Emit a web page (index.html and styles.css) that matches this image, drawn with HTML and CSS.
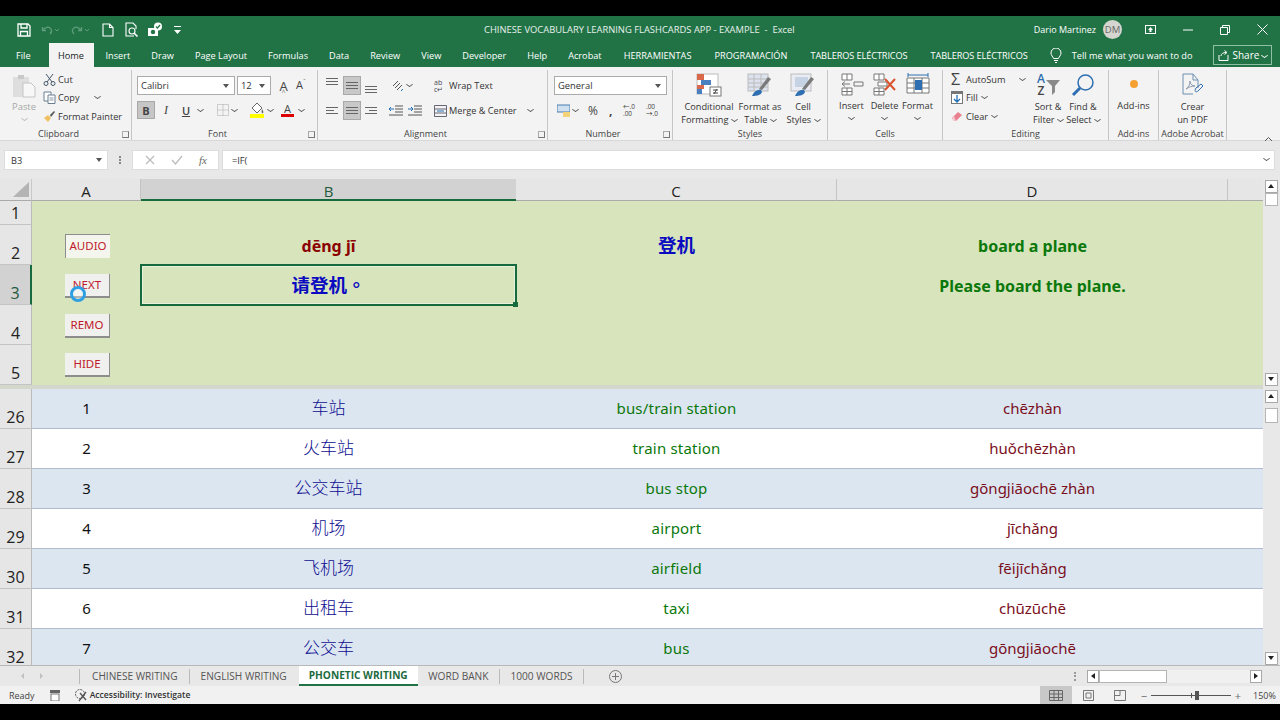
FILE: index.html
```html
<!DOCTYPE html>
<html lang="en">
<head>
    <meta charset="UTF-8">
    <title>CHINESE VOCABULARY LEARNING FLASHCARDS APP - EXAMPLE - Excel</title>
    <link rel="stylesheet" href="styles.css">
</head>
<body>
    <div class="window">
        <!-- title bar -->
        <div class="titlebar">
            <div class="qat">
                <svg class="q-save" width="14" height="14" viewBox="0 0 14 14" fill="none" stroke="#fff" stroke-width="1.3"><path d="M1 1h10l2 2v10H1z"/><path d="M4 1v4h6V1M3.500 13V8.500h7V13"/></svg>
                <svg class="q-undo" width="18" height="12" viewBox="0 0 18 12" fill="none" stroke="#5f9c7b" stroke-width="1.3"><path d="M1.500 3v3.500H5M2 6.500C3.500 3 8 2 10 5c1 1.500.5 3.500-1 5"/><path d="M14 5l2 2 2-2" stroke-width="1"/></svg>
                <svg class="q-redo" width="18" height="12" viewBox="0 0 18 12" fill="none" stroke="#5f9c7b" stroke-width="1.3"><path d="M10.500 3v3.500H7M10 6.500C8.500 3 4 2 2 5c-1 1.500-.5 3.500 1 5"/><path d="M14 5l2 2 2-2" stroke-width="1"/></svg>
                <svg class="q-new" width="12" height="14" viewBox="0 0 12 14" fill="none" stroke="#fff" stroke-width="1.1"><path d="M1 1h6.500L11 4.500V13H1zM7.500 1v3.500H11"/></svg>
                <svg class="q-prev" width="14" height="15" viewBox="0 0 14 15" fill="none" stroke="#fff" stroke-width="1.1"><path d="M9 14H1V1h7l3 3v3"/><circle cx="7" cy="9" r="3"/><path d="M9 11l3.500 3.500" stroke-width="1.600"/></svg>
                <svg class="q-cam" width="16" height="15" viewBox="0 0 16 15"><path d="M1 6h10v8H1z" fill="#fff"/><circle cx="6" cy="10" r="2.200" fill="#217346"/><circle cx="11" cy="4.500" r="4" fill="#fff"/><path d="M9 4.500l1.500 1.500 2.500-3" fill="none" stroke="#217346" stroke-width="1.200"/></svg>
                <svg class="q-more" width="7" height="8" viewBox="0 0 7 8" fill="#fff"><rect y="0" width="7" height="1"/><path d="M0 4h7L3.500 8z"/></svg>
            </div>
            <div class="doc-title">CHINESE VOCABULARY LEARNING FLASHCARDS APP - EXAMPLE &nbsp;- &nbsp;Excel</div>
            <div class="win-right">
                <span class="user">Dario Martinez</span>
                <span class="avatar">DM</span>
                <svg class="w-display" width="11" height="9" viewBox="0 0 11 9"><rect x=".5" y=".5" width="10" height="8" fill="none" stroke="#fff"/><path d="M5.500 2L8 5H3z M4.500 5h2v2h-2z" fill="#fff"/></svg>
                <svg class="w-min" width="10" height="2" viewBox="0 0 10 2"><path d="M0 1h10" stroke="#fff"/></svg>
                <svg class="w-max" width="10" height="10" viewBox="0 0 10 10" fill="none" stroke="#fff"><path d="M.5 2.500h7v7h-7zM2.500 2.500v-2h7v7h-2"/></svg>
                <svg class="w-close" width="11" height="11" viewBox="0 0 11 11"><path d="M.5.500l10 10M10.500.500l-10 10" stroke="#fff"/></svg>
            </div>
        </div>

        <!-- ribbon tabs -->
        <div class="tabbar">
            <span class="tab file-tab">File</span>
            <span class="tab active">Home</span>
            <span class="tab">Insert</span>
            <span class="tab">Draw</span>
            <span class="tab">Page Layout</span>
            <span class="tab">Formulas</span>
            <span class="tab">Data</span>
            <span class="tab">Review</span>
            <span class="tab">View</span>
            <span class="tab">Developer</span>
            <span class="tab">Help</span>
            <span class="tab">Acrobat</span>
            <span class="tab caps">HERRAMIENTAS</span>
            <span class="tab caps">PROGRAMACIÓN</span>
            <span class="tab caps tight-caps">TABLEROS ELÉCTRICOS</span>
            <span class="tab caps tight-caps">TABLEROS ELÉCTRICOS</span>
            <svg class="bulb" width="12" height="15" viewBox="0 0 12 15" fill="none" stroke="#fff"><path d="M3.500 10.500C3 8.500 1 7.500 1 5a5 5 0 0 1 10 0c0 2.500-2 3.500-2.500 5.500zM4 12.500h4M5 14.500h2"/></svg>
            <span class="tell">Tell me what you want to do</span>
            <span class="share">
                <svg width="11" height="11" viewBox="0 0 11 11" fill="none" stroke="#fff"><path d="M1 5v5.500h9V5M3 6c0-2 2-3.500 5-3.500M6.500.5L9 2.500 6.500 4.500"/></svg>
                Share <i class="chev white"></i>
            </span>
        </div>

        <!-- ribbon -->
        <div class="ribbon">
            <div class="group g-clipboard">
                <div class="group-body">
                    <div class="paste">
                        <svg width="24" height="24" viewBox="0 0 24 24"><path d="M1 3h16v20H1z" fill="#dedede"/><path d="M6 1h6v4H6z" fill="#c8c8c8"/><path d="M11 9h8l4 4v10H11z" fill="#f7f7f7" stroke="#c4c4c4"/></svg>
                        <span>Paste</span>
                        <i class="chev light"></i>
                    </div>
                    <div class="clip-list">
                        <div class="clip-row">
                            <svg width="13" height="13" viewBox="0 0 13 13" fill="none" stroke="#44586a"><circle cx="3" cy="10.500" r="2"/><circle cx="10" cy="10.500" r="2"/><path d="M4 9L10 1M9 9L3 1"/></svg>
                            Cut
                        </div>
                        <div class="clip-row">
                            <svg width="13" height="13" viewBox="0 0 13 13" fill="#fff" stroke="#6a7f92"><path d="M1 1h7v9H1z"/><path d="M5 4h7v8.500H5z"/><path d="M6.500 7h4M6.500 9h4" stroke-width=".8"/></svg>
                            Copy <i class="chev copy-chev"></i>
                        </div>
                        <div class="clip-row">
                            <svg width="13" height="13" viewBox="0 0 13 13"><path d="M1 8l4-3 3 3-3 4z" fill="#f0c060"/><path d="M7 5l4-4 1 1-4 5z" fill="#555"/></svg>
                            Format Painter
                        </div>
                    </div>
                </div>
                <div class="group-label has-launcher">Clipboard<i class="launcher"></i></div>
            </div>

            <div class="group g-font">
                <div class="group-body col">
                    <div class="tool-row">
                        <div class="combo font-name">Calibri<i class="caret"></i></div>
                        <div class="combo font-size">12<i class="caret"></i></div>
                        <span class="grow-a big">A<sup>^</sup></span>
                        <span class="grow-a">A<sup>ˇ</sup></span>
                    </div>
                    <div class="tool-row second">
                        <span class="fbtn pressed"><b>B</b></span>
                        <span class="fbtn italic"><em>I</em></span>
                        <span class="fbtn under">U</span><i class="chev tight"></i>
                        <svg class="bord" width="12" height="12" viewBox="0 0 12 12" fill="none" stroke="#a8a8a8" stroke-dasharray="1 1"><path d="M.5.5h11v11H.5zM6 .5v11M.5 6h11"/></svg><i class="chev tight"></i>
                        <svg class="fill-ic" width="15" height="16" viewBox="0 0 15 16"><path d="M2 6l5-5 5 5-5 5z" fill="#fff" stroke="#666"/><path d="M12 7c1 2 2 3 1 4s-2-1-1-4z" fill="#666"/><rect y="12" width="14" height="4" fill="#ffff00"/></svg><i class="chev tight"></i>
                        <span class="color-a">A</span><i class="chev color-chev"></i>
                    </div>
                </div>
                <div class="group-label has-launcher">Font<i class="launcher"></i></div>
            </div>

            <div class="group g-align">
                <div class="group-body">
                    <div class="align-grid">
                        <span class="abtn"><i class="lines top"></i></span>
                        <span class="abtn pressed"><i class="lines"></i></span>
                        <span class="abtn"><i class="lines bottom"></i></span>
                        <span class="abtn"><i class="lines left"></i></span>
                        <span class="abtn pressed"><i class="lines"></i></span>
                        <span class="abtn"><i class="lines right"></i></span>
                    </div>
                    <div class="align-extra">
                        <div class="orient">
                            <svg width="13" height="13" viewBox="0 0 13 13" fill="none" stroke="#555"><path d="M2 7l5-5M4 9l5-5M6 11l5-5"/><path d="M10 12l2-2" stroke="#1f6fb5"/></svg>
                            <i class="chev tight"></i>
                        </div>
                        <div class="indent">
                            <svg width="14" height="11" viewBox="0 0 14 11" stroke="#555" fill="none"><path d="M6 1h8M6 4h8M6 7h8M0 10h14"/><path d="M5 4H0M2 2L0 4l2 2" stroke="#1f6fb5"/></svg>
                            <svg width="14" height="11" viewBox="0 0 14 11" stroke="#555" fill="none"><path d="M6 1h8M6 4h8M6 7h8M0 10h14"/><path d="M0 4h5M3 2l2 2-2 2" stroke="#1f6fb5"/></svg>
                        </div>
                    </div>
                    <div class="align-wrap">
                        <div class="wrap-row"><span class="ab">ab<br>c↵</span>Wrap Text</div>
                        <div class="wrap-row">
                            <svg width="13" height="12" viewBox="0 0 13 12" fill="none" stroke="#667"><path d="M.5.500h12v11H.5zM.5 4h12M.5 8h12"/><path d="M3 6h7" stroke="#1f6fb5"/></svg>
                            Merge &amp; Center <i class="chev merge-chev"></i>
                        </div>
                    </div>
                </div>
                <div class="group-label has-launcher">Alignment<i class="launcher"></i></div>
            </div>

            <div class="group g-number">
                <div class="group-body col">
                    <div class="combo general">General<i class="caret"></i></div>
                    <div class="num-row">
                        <svg width="13" height="13" viewBox="0 0 13 13"><rect y="1" width="13" height="7" fill="#cfe0f0" stroke="#4a7fb0"/><rect x="6" y="8" width="7" height="5" fill="#f3d27a"/></svg>
                        <i class="chev tight"></i>
                        <span class="pct">%</span>
                        <span class="comma">,</span>
                        <span class="dec">←.0<br>.00</span>
                        <span class="dec">.00<br>→.0</span>
                    </div>
                </div>
                <div class="group-label has-launcher">Number<i class="launcher"></i></div>
            </div>

            <div class="group g-styles">
                <div class="group-body big-row">
                    <div class="big cf-big">
                        <svg width="26" height="24" viewBox="0 0 26 24"><rect x="1" y="1" width="21" height="20" fill="#fff" stroke="#bbb"/><rect x="1" y="1" width="7" height="6" fill="#d9694a"/><rect x="5" y="7" width="10" height="5" fill="#4a7fc0"/><rect x="1" y="12" width="7" height="4" fill="#d9694a"/><rect x="1" y="16" width="5" height="5" fill="#4a7fc0"/><rect x="14" y="14" width="11" height="9" fill="#fff" stroke="#777"/><path d="M17 17h5M17 20h5M21 16l-3 5" stroke="#444" fill="none"/></svg>
                        <span>Conditional<br>Formatting <i class="chev inl"></i></span>
                    </div>
                    <div class="big fat-big">
                        <svg width="26" height="24" viewBox="0 0 26 24"><rect x="1" y="1" width="20" height="17" fill="#dce3ee" stroke="#bbb"/><path d="M1 6h20M1 10h20M1 14h20M7 1v17M14 1v17" stroke="#bbb"/><path d="M24 6l-9 11-3-1 9-12z" fill="#7a7a7a"/><path d="M5 23c2-5 6-7 9-6l1 2c-1 3-5 4-10 4z" fill="#2d6fb0"/></svg>
                        <span>Format as<br>Table <i class="chev inl"></i></span>
                    </div>
                    <div class="big cell-big">
                        <svg width="26" height="24" viewBox="0 0 26 24"><rect x="1" y="1" width="20" height="17" fill="#e9edf3" stroke="#bbb"/><rect x="5" y="4" width="13" height="10" fill="#c5d3e5"/><path d="M24 6l-9 11-3-1 9-12z" fill="#7a7a7a"/><path d="M5 23c2-5 6-7 9-6l1 2c-1 3-5 4-10 4z" fill="#2d6fb0"/></svg>
                        <span>Cell<br>Styles <i class="chev inl"></i></span>
                    </div>
                </div>
                <div class="group-label">Styles</div>
            </div>

            <div class="group g-cells">
                <div class="group-body big-row">
                    <div class="big">
                        <svg width="24" height="23" viewBox="0 0 24 23" fill="#fff" stroke="#777"><path d="M2 1h10v6H2zM7 1v6M2 15h10v7H2zM7 15v7M2 18.500h10"/><path d="M14 9h9v4h-9zM10 11H2M5 8.500L2 11l3 2.500" fill="none"/></svg>
                        <span>Insert</span><i class="chev"></i>
                    </div>
                    <div class="big">
                        <svg width="24" height="23" viewBox="0 0 24 23" fill="#fff" stroke="#777"><path d="M1 1h10v6H1zM6 1v6M1 15h10v7H1zM6 15v7M1 18.500h10M5 9h9v4H5z"/><path d="M12 6l10 11M22 6L12 17" stroke="#d9532c" stroke-width="2"/></svg>
                        <span>Delete</span><i class="chev"></i>
                    </div>
                    <div class="big">
                        <svg width="24" height="23" viewBox="0 0 24 23" fill="#fff" stroke="#777"><path d="M1 5h22v15H1zM8 5v15M16 5v15M1 10h22M1 15h22"/><rect x="9" y="7" width="7" height="10" fill="#2d6fb0" stroke="none"/><path d="M2 2h20M2 0v4M22 0v4" stroke="#2d6fb0"/></svg>
                        <span>Format</span><i class="chev"></i>
                    </div>
                </div>
                <div class="group-label">Cells</div>
            </div>

            <div class="group g-editing">
                <div class="group-body">
                    <div class="edit-list">
                        <div class="edit-row"><span class="sigma">Σ</span>AutoSum <i class="chev auto-chev"></i></div>
                        <div class="edit-row">
                            <svg width="12" height="13" viewBox="0 0 12 13"><rect x=".5" y=".5" width="11" height="12" fill="#fff" stroke="#777"/><rect x=".5" y=".5" width="11" height="2.500" fill="#777"/><path d="M6 4v7M3 8l3 3 3-3" fill="none" stroke="#1f6fb5" stroke-width="1.300"/></svg>
                            Fill <i class="chev inl"></i>
                        </div>
                        <div class="edit-row">
                            <svg width="12" height="11" viewBox="0 0 12 11"><path d="M1 7l6-6 4 3-6 6H3z" fill="#e8808f"/><path d="M1 7l2 3h2L3 5z" fill="#f6c6cc"/></svg>
                            Clear <i class="chev inl"></i>
                        </div>
                    </div>
                    <div class="big sort">
                        <div class="sort-icon">
                            <span class="az az-a">A</span>
                            <span class="az az-z">Z</span>
                            <svg width="14" height="15" viewBox="0 0 14 15"><path d="M0 0h14L9 6v6l-3 3V6z" fill="#8a8a8a"/></svg>
                        </div>
                        <span>Sort &amp;<br>Filter <i class="chev inl"></i></span>
                    </div>
                    <div class="big find">
                        <svg width="24" height="24" viewBox="0 0 24 24" fill="none"><circle cx="14.500" cy="9.500" r="7.500" stroke="#2d6fb0" stroke-width="1.500"/><path d="M9 15l-7 7" stroke="#2d6fb0" stroke-width="3"/></svg>
                        <span>Find &amp;<br>Select <i class="chev inl"></i></span>
                    </div>
                </div>
                <div class="group-label">Editing</div>
            </div>

            <div class="group g-addins">
                <div class="group-body big-row">
                    <div class="big addin">
                        <svg width="24" height="22" viewBox="0 0 24 22"><circle cx="12" cy="11" r="4" fill="#f5a033"/></svg>
                        <span>Add-ins</span>
                    </div>
                </div>
                <div class="group-label">Add-ins</div>
            </div>

            <div class="group g-acrobat">
                <div class="group-body big-row">
                    <div class="big">
                        <svg width="24" height="24" viewBox="0 0 24 24" fill="none" stroke="#6f8fb0"><path d="M17 15V7l-5-6H2v20h10"/><path d="M12 1v6h5"/><path d="M5 16c3-2 4-5 4-8 0 3 2 5 5 5-3 0-6 1-9 3z" stroke="#8a9ab0"/><path d="M15 15l5-4 2 2-5 5c-2 2-4 0-2-3z" stroke="#2d6fb0"/></svg>
                        <span>Crear<br>un PDF</span>
                    </div>
                </div>
                <div class="group-label">Adobe Acrobat</div>
            </div>
            <div class="collapse-ribbon">
                <svg width="9" height="5" viewBox="0 0 9 5" fill="none" stroke="#555"><path d="M.5 4.500l4-4 4 4"/></svg>
            </div>
        </div>

        <!-- formula bar -->
        <div class="formula-bar">
            <div class="name-box">B3<i class="caret"></i></div>
            <span class="fb-dots"></span>
            <div class="fb-buttons">
                <svg width="10" height="10" viewBox="0 0 10 10" stroke="#bbb" fill="none" stroke-width="1.200"><path d="M1 1l8 8M9 1L1 9"/></svg>
                <svg width="12" height="10" viewBox="0 0 12 10" stroke="#bbb" fill="none" stroke-width="1.200"><path d="M1 5l3.500 4L11 1"/></svg>
                <em>fx</em>
            </div>
            <div class="formula-input">=IF(<i class="chev fb-chev"></i></div>
        </div>

        <!-- sheet -->
        <div class="pane top-pane">
            <div class="pane-cells">
                <div class="sheet-row col-heads">
                    <div class="corner"><i></i></div>
                    <div class="col-head">A</div>
                    <div class="col-head selected">B</div>
                    <div class="col-head">C</div>
                    <div class="col-head">D</div>
                    <div class="col-head no-text"></div>
                </div>
                <div class="sheet-row card-row h24">
                    <div class="row-head">1</div><div></div><div></div><div></div><div></div><div></div>
                </div>
                <div class="sheet-row card-row">
                    <div class="row-head">2</div><div></div>
                    <div class="cell pinyin-big">dēng jī</div>
                    <div class="cell hanzi-big">登机</div>
                    <div class="cell meaning-big">board a plane</div><div></div>
                </div>
                <div class="sheet-row card-row">
                    <div class="row-head selected">3</div><div></div>
                    <div class="cell hanzi-big active-cell">请登机。<i class="fill-handle"></i></div>
                    <div></div>
                    <div class="cell meaning-big">Please board the plane.</div><div></div>
                </div>
                <div class="sheet-row card-row">
                    <div class="row-head">4</div><div></div><div></div><div></div><div></div><div></div>
                </div>
                <div class="sheet-row card-row">
                    <div class="row-head">5</div><div></div><div></div><div></div><div></div><div></div>
                </div>
                <div class="freeze-line"></div>
                <div class="sheet-btn btn-audio">AUDIO</div>
                <div class="sheet-btn btn-next">NEXT</div>
                <div class="sheet-btn btn-remo">REMO</div>
                <div class="sheet-btn btn-hide">HIDE</div>
                <div class="busy-cursor"></div>
            </div>
            <div class="vscroll">
                <span class="sb-btn up"></span>
                <span class="sb-thumb first"></span>
                <span class="sb-space"></span>
                <span class="sb-btn down"></span>
            </div>
        </div>
        <div class="pane bottom-pane">
            <div class="pane-cells">
                <div class="sheet-row word blue"><div class="row-head">26</div><div class="cell num">1</div><div class="cell hanzi">车站</div><div class="cell meaning">bus/train station</div><div class="cell pinyin">chēzhàn</div><div></div></div>
                <div class="sheet-row word"><div class="row-head">27</div><div class="cell num">2</div><div class="cell hanzi">火车站</div><div class="cell meaning">train station</div><div class="cell pinyin">huǒchēzhàn</div><div></div></div>
                <div class="sheet-row word blue"><div class="row-head">28</div><div class="cell num">3</div><div class="cell hanzi">公交车站</div><div class="cell meaning">bus stop</div><div class="cell pinyin">gōngjiāochē zhàn</div><div></div></div>
                <div class="sheet-row word"><div class="row-head">29</div><div class="cell num">4</div><div class="cell hanzi">机场</div><div class="cell meaning">airport</div><div class="cell pinyin">jīchǎng</div><div></div></div>
                <div class="sheet-row word blue"><div class="row-head">30</div><div class="cell num">5</div><div class="cell hanzi">飞机场</div><div class="cell meaning">airfield</div><div class="cell pinyin">fēijīchǎng</div><div></div></div>
                <div class="sheet-row word"><div class="row-head">31</div><div class="cell num">6</div><div class="cell hanzi">出租车</div><div class="cell meaning">taxi</div><div class="cell pinyin">chūzūchē</div><div></div></div>
                <div class="sheet-row word blue"><div class="row-head">32</div><div class="cell num">7</div><div class="cell hanzi">公交车</div><div class="cell meaning">bus</div><div class="cell pinyin">gōngjiāochē</div><div></div></div>
            </div>
            <div class="vscroll">
                <span class="sb-btn up"></span>
                <span class="sb-thumb second"></span>
                <span class="sb-space"></span>
                <span class="sb-btn down"></span>
            </div>
        </div>

        <!-- sheet tabs -->
        <div class="sheet-tabs">
            <div class="tab-nav"><i class="nav-l"></i><i class="nav-r"></i></div>
            <span class="stab first-stab">CHINESE WRITING</span>
            <span class="stab before-active">ENGLISH WRITING</span>
            <span class="stab active">PHONETIC WRITING</span>
            <span class="stab">WORD BANK</span>
            <span class="stab">1000 WORDS</span>
            <svg class="add-sheet" width="13" height="13" viewBox="0 0 13 13" fill="none" stroke="#777"><circle cx="6.500" cy="6.500" r="6"/><path d="M6.500 3v7M3 6.500h7"/></svg>
            <span class="split-dots"></span>
            <div class="hscroll">
                <span class="hs-btn left"></span>
                <span class="hs-thumb"></span>
                <span class="hs-btn right"></span>
            </div>
        </div>

        <!-- status bar -->
        <div class="statusbar">
            <span class="ready">Ready</span>
            <svg class="st-macro" width="10" height="11" viewBox="0 0 10 11"><rect y="0" width="10" height="3" fill="#666"/><rect y="4" x="1" width="8" height="7" fill="#fff" stroke="#777"/></svg>
            <svg class="st-access" width="14" height="14" viewBox="0 0 14 14" fill="none" stroke="#555"><circle cx="6" cy="6" r="4.500" stroke-dasharray="2 1"/><path d="M6 5l6 7M12 4L5 13" stroke-width="1.300"/></svg>
            <b class="access">Accessibility: Investigate</b>
            <div class="views">
                <span class="view on"><svg width="14" height="11" viewBox="0 0 14 11" fill="none" stroke="#666"><path d="M.5.500h13v10H.5zM5 .5v10M9.500.5v10M.5 4h13M.5 7.500h13"/></svg></span>
                <span class="view"><svg width="11" height="11" viewBox="0 0 11 11" fill="none" stroke="#777"><path d="M.5.500h10v10H.5zM3 3h5v5H3z"/></svg></span>
                <span class="view"><svg width="12" height="11" viewBox="0 0 12 11" fill="none" stroke="#777"><path d="M.5.500h11v10H.5zM6 .5v5H.5"/></svg></span>
            </div>
            <div class="zoom">
                <span class="zoom-sign">−</span>
                <div class="slider"><i class="mid"></i><i class="knob"></i></div>
                <span class="zoom-sign">+</span>
                <span class="pct-label">150%</span>
            </div>
        </div>
    </div>
</body>
</html>
```

FILE: styles.css
```css
* {
    margin: 0;
    padding: 0;
    box-sizing: border-box;
}

html, body {
    width: 1280px;
    height: 720px;
    overflow: hidden;
    background: #000;
}

body {
    font-family: "Open Sans", "Noto Sans", "Noto Sans CJK SC", sans-serif;
    font-size: 9.200px;
    color: #333;
}

i {
    font-style: normal;
}

.window {
    display: flex;
    flex-direction: column;
    height: 688px;
    margin-top: 16px;
    background: #e8e8e8;
}

/* title bar */
.titlebar {
    position: relative;
    display: flex;
    align-items: center;
    justify-content: space-between;
    height: 27px;
    flex: none;
    background: #217346;
    color: #fff;
}

.qat {
    display: flex;
    align-items: center;
    padding-left: 17px;
}

.q-undo { margin-left: 10px; }
.q-redo { margin-left: 12px; }
.q-new { margin-left: 13px; }
.q-prev { margin-left: 11px; }
.q-cam { margin-left: 8px; }
.q-more { margin-left: 11px; }

.doc-title {
    position: absolute;
    left: 484px;
    width: 320px;
    font-size: 9.400px;
    white-space: nowrap;
    color: #e8f1ec;
}

.win-right {
    display: flex;
    align-items: center;
    padding-right: 12px;
}

.user { font-size: 9px; }

.avatar {
    display: flex;
    align-items: center;
    justify-content: center;
    width: 19px;
    height: 19px;
    margin-left: 7px;
    border-radius: 50%;
    background: #d6d6d0;
    color: #666;
    font-size: 9.500px;
}

.w-display { margin-left: 23px; }
.w-min { margin-left: 27px; }
.w-max { margin-left: 27px; }
.w-close { margin-left: 27px; }

/* ribbon tabs */
.tabbar {
    display: flex;
    align-items: center;
    height: 24px;
    flex: none;
    background: #217346;
    color: #fff;
    font-size: 9.200px;
    white-space: nowrap;
}

.tab {
    display: flex;
    align-items: center;
    height: 24px;
    padding: 0 10.500px;
}

.tab.caps { padding: 0 11.500px; }
.tab.tight-caps { letter-spacing: -.1px; }

.file-tab { margin-left: 5.500px; }

.tab.active {
    background: #f3f3f3;
    color: #222;
    padding: 0 10px 0 9px;
    margin: 0 1px 0 8px;
}

.bulb { margin-left: 10.500px; }
.tell { margin-left: 10px; }

.share {
    display: flex;
    align-items: center;
    gap: 3px;
    height: 20px;
    margin-left: 21px;
    padding: 0 4px;
    border: 1px solid #8fc0a6;
    font-size: 10px;
}

/* ribbon */
.ribbon {
    display: flex;
    height: 74px;
    flex: none;
    background: #f3f3f3;
    border-bottom: 1px solid #d8d8d8;
    padding-top: 3px;
    white-space: nowrap;
    color: #333;
}

.group {
    position: relative;
    display: flex;
    flex-direction: column;
    flex: none;
    border-right: 1px solid #c6c6c6;
    height: 70px;
}

.group-body {
    display: flex;
    flex: 1;
    min-height: 0;
}

.group-body.col {
    flex-direction: column;
}

.group-label {
    position: relative;
    height: 13px;
    line-height: 13px;
    text-align: center;
    font-size: 9px;
    color: #444;
}

.group-label.has-launcher { padding-right: 14px; }

.launcher {
    position: absolute;
    right: 2px;
    bottom: 2px;
    width: 7px;
    height: 7px;
    border: 1px solid #777;
    border-top-color: #aaa;
    border-left-color: #aaa;
}

.g-clipboard { width: 132px; }
.g-font { width: 186px; }
.g-align { width: 230px; }
.g-number { width: 125px; }
.g-styles { width: 155px; }
.g-cells { width: 115px; }
.g-editing { width: 166px; }
.g-addins { width: 50px; }
.g-acrobat { width: 68px; }

.chev {
    display: inline-block;
    width: 5px;
    height: 5px;
    border-right: 1px solid #555;
    border-bottom: 1px solid #555;
    transform: scaleY(.7) rotate(45deg);
    flex: none;
}

.chev.white { border-color: #fff; }
.chev.light { border-color: #bbb; }
.chev.inl { margin: 0 0 2px 1px; vertical-align: middle; }
.chev.tight { margin: 0 0 2px 3px; }

.caret {
    position: absolute;
    right: 5px;
    top: 7px;
    border: 3px solid transparent;
    border-top: 4px solid #555;
    border-bottom: 0;
}

/* clipboard */
.paste {
    display: flex;
    flex-direction: column;
    align-items: center;
    width: 36px;
    margin: 4px 0 0 6px;
    color: #a8a8a8;
    font-size: 9.400px;
}

.paste span { margin-top: 2px; }
.paste .chev { margin-top: 3px; }

.clip-list {
    display: flex;
    flex-direction: column;
    margin-left: 1px;
}

.clip-row {
    display: flex;
    align-items: center;
    gap: 2px;
    height: 18.500px;
    font-size: 9.200px;
}

.copy-chev { margin: 0 0 2px 13px; }

/* font */
.tool-row {
    display: flex;
    align-items: center;
    height: 24px;
    margin-top: 3px;
    padding-left: 5px;
}

.tool-row.second {
    height: 20px;
    margin-top: 3px;
}

.combo {
    position: relative;
    height: 19px;
    line-height: 17px;
    padding-left: 3px;
    border: 1px solid #ababab;
    background: #fff;
    font-size: 9.400px;
}

.font-name { width: 98px; }
.font-size { width: 34px; margin-left: 2px; }

.grow-a {
    width: 14px;
    margin-left: 4px;
    font-size: 11px;
    line-height: 14px;
    color: #444;
}

.grow-a.big { width: 17px; margin-left: 4px; font-size: 13px; }
.grow-a sup { font-size: 7px; color: #777; vertical-align: 5px; line-height: 0; }

.fbtn {
    display: flex;
    align-items: center;
    justify-content: center;
    width: 18px;
    height: 18px;
    margin-right: 2px;
    font-size: 11px;
    color: #444;
}

.fbtn.pressed {
    background: #c6c6c6;
    border: 1px solid #a8a8a8;
}

.fbtn em { font-family: "Liberation Serif", serif; font-size: 12px; }

.under {
    margin-right: 0;
    text-decoration: underline;
    font-weight: 600;
}

.bord { margin: 0 0 0 14px; }
.fill-ic { margin-left: 13px; }

.color-a {
    width: 13px;
    margin-left: 8px;
    font-size: 11px;
    line-height: 11px;
    text-align: center;
    border-bottom: 3px solid #d00;
    color: #444;
}

.color-chev { margin: 0 0 2px 5px; }

/* alignment */
.align-grid {
    display: grid;
    grid-template-columns: repeat(3, 19.500px);
    grid-auto-rows: 25px;
    margin: 6px 0 0 5px;
}

.abtn {
    display: flex;
    align-items: center;
    justify-content: center;
    width: 18px;
    height: 19px;
}

.abtn.pressed {
    background: #c8c8c8;
    border: 1px solid #a9a9a9;
}

.lines {
    display: block;
    width: 12px;
    height: 7px;
    border-top: 1px solid #666;
    border-bottom: 1px solid #666;
    background: linear-gradient(#666, #666) center / 100% 1px no-repeat;
}

.lines.top { transform: translateY(-4px); }
.lines.bottom { transform: translateY(4px); }
.lines.left { background: linear-gradient(#666, #666) left center / 8px 1px no-repeat; }
.lines.right { background: linear-gradient(#666, #666) right center / 8px 1px no-repeat; }

.align-extra {
    display: flex;
    flex-direction: column;
    width: 50.500px;
    margin-left: 2px;
    padding: 6px 0 0 7px;
}

.orient {
    display: flex;
    align-items: center;
    height: 19px;
}

.indent {
    display: flex;
    align-items: center;
    gap: 5px;
    height: 19px;
    margin: 6px 0 0 -1.500px;
}

.align-wrap {
    display: flex;
    flex-direction: column;
    margin-top: 6px;
}

.wrap-row {
    display: flex;
    align-items: center;
    gap: 2px;
    height: 19px;
    font-size: 9.200px;
}

.wrap-row + .wrap-row { margin-top: 6px; }

.ab {
    width: 13px;
    font-size: 7px;
    line-height: 7px;
    color: #445;
}

.merge-chev { margin: 0 0 2px 9px; }

/* number */
.combo.general {
    flex: none;
    width: 113px;
    margin: 6px 0 0 6px;
}

.num-row {
    display: flex;
    align-items: center;
    height: 24px;
    margin: 3px 0 0 9px;
    color: #444;
}

.pct { margin-left: 10px; font-size: 12px; }
.comma { width: 13px; margin-left: 11px; font-size: 12px; font-weight: 700; }

.dec {
    width: 17px;
    margin-left: 1px;
    font-size: 6.500px;
    line-height: 7px;
    color: #444;
}

.dec + .dec { margin-left: 6px; }

/* big buttons */
.big-row {
    justify-content: space-around;
}

.big {
    display: flex;
    flex-direction: column;
    align-items: center;
    flex: none;
    padding-top: 3px;
    text-align: center;
    font-size: 9.200px;
    line-height: 13px;
}

.big svg {
    flex: none;
    margin-bottom: 3px;
}

.big > .chev { margin-top: 3px; }

.g-styles .big-row { justify-content: flex-start; padding-left: 9px; }
.cf-big { width: 54px; }
.fat-big { width: 46px; margin-left: 1px; }
.cell-big { width: 34px; margin-left: 3px; }

.g-cells .big-row { justify-content: flex-start; padding-left: 8px; gap: 2px; }
.g-cells .big { width: 31px; }

/* editing */
.g-editing .group-body { padding-left: 8px; }

.edit-list {
    display: flex;
    flex-direction: column;
    width: 80px;
}

.edit-row {
    display: flex;
    align-items: center;
    gap: 3px;
    height: 18.500px;
    font-size: 9.200px;
}

.sigma {
    width: 12px;
    font-size: 16px;
    line-height: 15px;
    color: #444;
}

.auto-chev { margin: 0 0 2px 12px; }

.sort { width: 34px; }
.find { width: 34px; margin-left: 1px; }

.sort-icon {
    display: grid;
    grid-template-columns: 10px 14px;
    grid-template-rows: 12px 12px;
    margin-bottom: 3px;
    height: 24px;
}

.sort-icon svg {
    grid-column: 2;
    grid-row: 1 / 3;
    margin: 7px 0 0 0;
}

.az {
    font-size: 12px;
    line-height: 12px;
    font-weight: 600;
}

.az-a { grid-column: 1; grid-row: 1; color: #2d6fb0; }
.az-z { grid-column: 1; grid-row: 2; color: #444; }

.addin svg { margin-bottom: 4px; }

.collapse-ribbon {
    margin: 62px 0 0 37px;
}

/* formula bar */
.formula-bar {
    display: flex;
    align-items: center;
    flex: none;
    height: 38px;
    padding: 0 5px 0 4px;
    background: #e8e8e8;
}

.name-box {
    position: relative;
    width: 104px;
    height: 20px;
    line-height: 20px;
    padding-left: 6px;
    background: #fff;
    border: 1px solid #dcdcdc;
}

.fb-dots {
    width: 2px;
    height: 8px;
    margin: 0 11px;
    border-left: 2px dotted #888;
}

.fb-buttons {
    display: flex;
    align-items: center;
    width: 87px;
    height: 20px;
    gap: 16px;
    padding-left: 12px;
    background: #fff;
    border: 1px solid #dcdcdc;
}

.fb-buttons em {
    font-family: "Liberation Serif", serif;
    font-size: 11px;
    color: #666;
}

.formula-input {
    position: relative;
    flex: 1;
    height: 20px;
    line-height: 19px;
    margin-left: 3px;
    padding-left: 9px;
    background: #fff;
    border: 1px solid #dcdcdc;
}

.fb-chev {
    position: absolute;
    right: 5px;
    top: 5px;
}

/* sheet */
.pane {
    display: flex;
    flex: none;
    background: #ececec;
}

.top-pane { height: 209px; }
.bottom-pane { height: 277px; overflow: hidden; }

.pane-cells {
    position: relative;
    flex: 1;
}

.bottom-pane .pane-cells {
    padding-top: 1px;
    background: #d4d8cc;
}

.sheet-row {
    display: grid;
    grid-template-columns: 32px 109px 375px 321px 391px 35px;
    grid-template-rows: 40px;
    height: 40px;
}

.col-heads {
    grid-template-rows: 22px;
    height: 22px;
    background: #e6e6e6;
    color: #222;
}

.corner {
    position: relative;
    border-right: 1px solid #c8c8c8;
    border-bottom: 1px solid #aaa;
}

.corner i {
    position: absolute;
    right: 2px;
    bottom: 3px;
    border-left: 16px solid transparent;
    border-bottom: 15px solid #b4b4b4;
}

.col-head {
    text-align: center;
    line-height: 25px;
    border-right: 1px solid #c4c4c4;
    border-bottom: 1px solid #aaa;
    font-size: 15px;
}

.col-head.selected {
    background: #d2d2d2;
    color: #24593c;
    border-bottom: 2px solid #17693e;
    border-right: 0;
}

.col-head.no-text { border-right: 0; }

.row-head {
    display: flex;
    align-items: flex-end;
    justify-content: center;
    padding-bottom: 1px;
    background: #e6e6e6;
    border-bottom: 1px solid #c4c4c4;
    border-right: 1px solid #bbb;
    color: #222;
    font-size: 16px;
    line-height: 20px;
}

.row-head.selected {
    background: #d2d2d2;
    color: #24593c;
    border-right: 2px solid #17693e;
}

.card-row { background: #d8e4bc; }
.card-row.h24 { grid-template-rows: 24px; height: 24px; }

.cell {
    position: relative;
    display: flex;
    align-items: center;
    justify-content: center;
    font-family: "Noto Sans", "Noto Sans CJK SC", sans-serif;
    font-size: 15px;
}

.pinyin-big {
    padding-top: 1px;
    font-weight: 700;
    font-size: 16px;
    color: #8b0000;
}

.hanzi-big {
    padding-bottom: 2px;
    font-family: "Noto Sans CJK TC", "Noto Sans CJK SC", sans-serif;
    font-weight: 700;
    font-size: 18.500px;
    color: #0a0ac0;
}

.meaning-big {
    padding-top: 1px;
    font-weight: 700;
    font-size: 16px;
    color: #0b780b;
}

.active-cell {
    outline: 2px solid #17693e;
    outline-offset: -1px;
    box-shadow: inset 0 0 0 2px #e6f2da;
    z-index: 1;
}

.fill-handle {
    position: absolute;
    right: -2px;
    bottom: -2px;
    width: 5px;
    height: 5px;
    background: #17693e;
}

.freeze-line {
    height: 3px;
    background: #d4d8cc;
}

/* shape buttons on the sheet */
.sheet-btn {
    position: absolute;
    left: 65px;
    width: 45px;
    height: 24px;
    line-height: 22px;
    text-align: center;
    background: #f0f0ee;
    border-right: 1px solid #8d8d8d;
    border-bottom: 2px solid #8d8d8d;
    font-family: "Noto Sans", sans-serif;
    font-size: 11.500px;
    color: #c01a2c;
}

.btn-audio {
    top: 55px;
    background: #f4f6ee;
    border: 0;
    border-top: 1px solid #8d8d8d;
    border-left: 1px solid #8d8d8d;
}

.btn-next { top: 95px; }
.btn-remo { top: 135px; }
.btn-hide { top: 174px; }

.busy-cursor {
    position: absolute;
    left: 70px;
    top: 107px;
    width: 16px;
    height: 16px;
    border: 3px solid #2f9fe3;
    border-radius: 50%;
    background: rgba(255,255,255,.35);
}

/* data rows */
.word { background: #fff; }
.word.blue { background: #dce6f1; }

.word .cell,
.word > div:last-child {
    border-bottom: 1px solid #b0bccd;
}

.word .num,
.word .meaning,
.word .pinyin {
    padding-bottom: 2px;
}

.num { color: #111; font-size: 15px; }

.hanzi {
    padding-bottom: 4px;
    font-family: "Noto Sans CJK SC", sans-serif;
    font-weight: 300;
    font-size: 17px;
    color: #0c0c90;
}

.meaning { color: #0b780b; letter-spacing: .2px; }
.pinyin { color: #7a0f1c; }

/* scrollbars */
.vscroll {
    display: flex;
    flex-direction: column;
    width: 17px;
    padding: 1px 2px 2px;
    background: #e8e8e8;
}

.bottom-pane .vscroll { padding: 2px 2px 0; }

.sb-btn {
    position: relative;
    flex: none;
    width: 13px;
    height: 13px;
    background: #fff;
    border: 1px solid #a8a8a8;
}

.sb-btn::after {
    content: "";
    position: absolute;
    left: 2px;
    top: 3px;
    border: 3.500px solid transparent;
    border-top: 0;
    border-bottom: 4px solid #222;
}

.sb-btn.down::after {
    border-bottom: 0;
    border-top: 4px solid #222;
}

.sb-thumb {
    flex: none;
    width: 13px;
    background: #fff;
    border: 1px solid #b5b5b5;
}

.sb-thumb.first { height: 13px; }
.sb-thumb.second { height: 15px; margin-top: 5px; }
.sb-space { flex: 1; }

/* sheet tabs */
.sheet-tabs {
    display: flex;
    align-items: center;
    flex: none;
    height: 21px;
    padding-right: 18px;
    background: #e8e8e8;
    border-top: 1px solid #b8b8b8;
    font-size: 10.150px;
    color: #555;
    white-space: nowrap;
}

.tab-nav {
    display: flex;
    align-items: center;
    gap: 16px;
    width: 80px;
    height: 15px;
    padding-left: 21px;
    border-right: 1px solid #bbb;
}

.nav-l {
    border: 3px solid transparent;
    border-right: 3px solid #c0c0c0;
    border-left: 0;
}

.nav-r {
    border: 3px solid transparent;
    border-left: 3px solid #c0c0c0;
    border-right: 0;
}

.stab {
    display: flex;
    align-items: center;
    height: 15px;
    padding: 0 10.500px;
    border-right: 1px solid #bbb;
}

.stab.first-stab { padding: 0 11px 0 12px; }

.stab.before-active {
    border-right: 0;
    padding: 0 12px 0 11px;
}

.stab.active {
    height: 20px;
    padding: 0 10px;
    background: #fff;
    border-right: 0;
    border-bottom: 2px solid #217346;
    font-weight: 700;
    color: #1d6a40;
}

.add-sheet { margin-left: 25px; }

.split-dots {
    width: 2px;
    height: 9px;
    margin-left: auto;
    margin-right: 11px;
    border-left: 2px dotted #999;
}

.hscroll {
    display: flex;
    align-items: center;
    width: 175px;
    height: 13px;
    background: #f0f0f0;
}

.hs-btn {
    position: relative;
    flex: none;
    width: 12px;
    height: 13px;
    background: #fff;
    border: 1px solid #a8a8a8;
}

.hs-btn::after {
    content: "";
    position: absolute;
    top: 2px;
    left: 3px;
    border: 3.500px solid transparent;
}

.hs-btn.left::after {
    border-left: 0;
    border-right: 4px solid #222;
}

.hs-btn.right {
    margin-left: auto;
}

.hs-btn.right::after {
    border-right: 0;
    border-left: 4px solid #222;
}

.hs-thumb {
    width: 68px;
    height: 13px;
    background: #fff;
    border: 1px solid #b5b5b5;
}

/* status bar */
.statusbar {
    display: flex;
    align-items: center;
    flex: none;
    height: 18px;
    padding-right: 6px;
    background: #f1f1f1;
    font-size: 9px;
    color: #444;
}

.ready { margin-left: 9px; }
.st-macro { margin-left: 15px; }
.st-access { margin-left: 14px; }

.access {
    margin-left: 2px;
    font-size: 8.600px;
    color: #333;
    font-weight: 600;
}

.views {
    display: flex;
    align-items: center;
    margin-left: auto;
}

.view {
    display: flex;
    align-items: center;
    justify-content: center;
    width: 32px;
    height: 18px;
}

.view.on { background: #c8c8c8; }

.zoom {
    display: flex;
    align-items: center;
    margin-left: 3px;
}

.zoom-sign {
    width: 10px;
    text-align: center;
    font-size: 11px;
    color: #666;
}

.slider {
    position: relative;
    width: 80px;
    height: 1px;
    margin: 0 2px;
    background: #555;
}

.slider .mid {
    position: absolute;
    left: 40px;
    top: -2px;
    width: 1px;
    height: 5px;
    background: #555;
}

.slider .knob {
    position: absolute;
    left: 44px;
    top: -4px;
    width: 4px;
    height: 9px;
    background: #555;
}

.pct-label {
    width: 21px;
    margin-left: 10px;
}
```
